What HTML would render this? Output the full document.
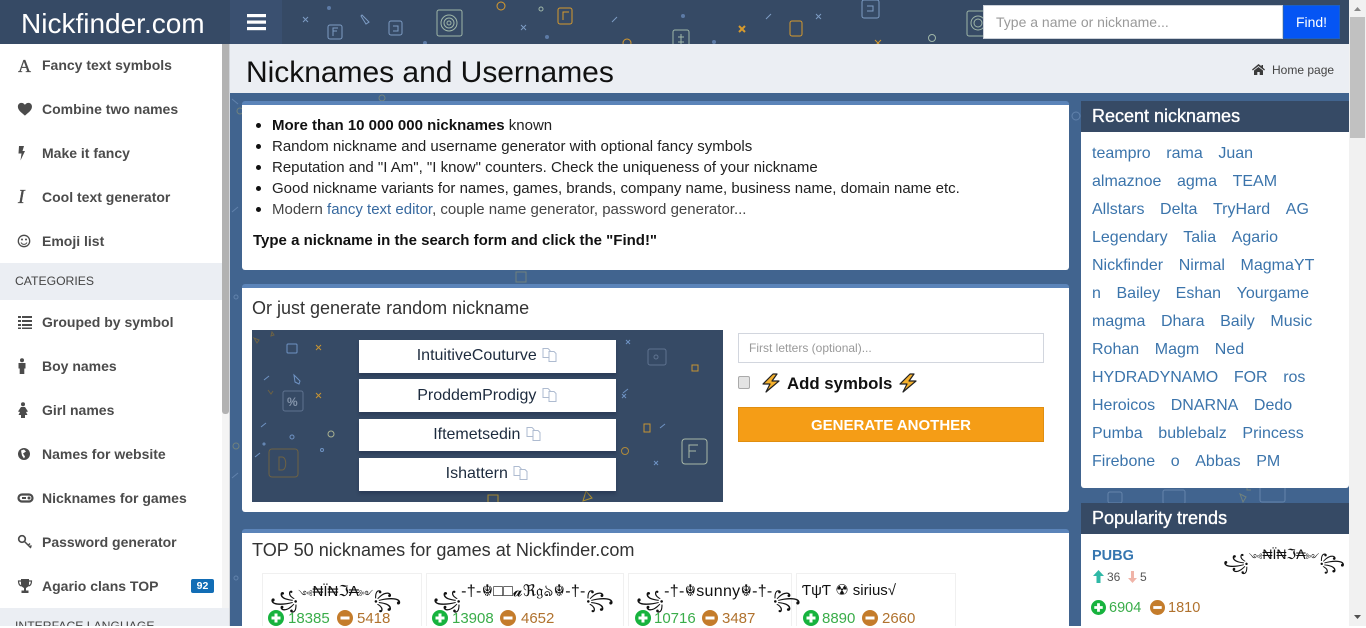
<!DOCTYPE html>
<html><head><meta charset="utf-8"><title>Nicknames and Usernames</title>
<style>
*{box-sizing:border-box}
html,body{margin:0;padding:0;width:1366px;height:626px;overflow:hidden;background:#fff;font-family:"Liberation Sans",sans-serif}
.a{position:absolute;white-space:nowrap}
#bg{position:absolute;left:0;top:0}
.nav{position:absolute;left:42px;font-size:14px;font-weight:700;color:#4b4b4b;white-space:nowrap;line-height:16px}
.ic{position:absolute;left:17px;width:18px;height:16px;fill:#4b4b4b}
.band{position:absolute;left:0;width:222px;background:#ebeef3;color:#444;font-size:12.2px;padding-left:15px}
.card{position:absolute;background:#fff;border-top:4px solid #5b84b9;border-radius:3px}
ul{margin:0;padding:0;list-style:none}
li{position:absolute;left:272px;font-size:15px;color:#222;white-space:nowrap;line-height:21px}
li:before{content:"";position:absolute;left:-16px;top:8px;width:5px;height:5px;border-radius:50%;background:#111}
.nm{position:absolute;left:359px;width:257px;background:#fff;box-shadow:0 3px 3px rgba(30,45,70,.45);text-align:center;font-size:16px;color:#1d2b3e;white-space:nowrap}
.nm svg{vertical-align:-3px}
.rc{position:absolute;left:1092px;font-size:16px;color:#3b74ab;white-space:nowrap;word-spacing:0;line-height:28px}
.rc span{margin-right:15.6px}
.hd{font-size:18px;font-weight:400;line-height:22px;color:#fff;-webkit-text-stroke:.35px #fff}
.it{position:absolute;top:573px;height:53px;border:1px solid #f0f0f0;border-bottom:0}
.nk{position:absolute;font-size:15px;line-height:20px;color:#111;white-space:nowrap;font-family:"Liberation Sans","DejaVu Sans",sans-serif}
.nk .s{font-size:18px;position:relative;top:10px}
.nk .t{font-size:9px;position:relative;top:1px}
.nk .m{font-size:16px;letter-spacing:.3px}
.g{color:#3aad4a;font-size:15px}.o{color:#b0722e;font-size:15px}
</style></head><body>

<!-- main background -->
<div class="a" style="left:230px;top:93px;width:1119px;height:533px;background:#41648f"></div>
<!-- header -->
<div class="a" style="left:0;top:0;width:1349px;height:44px;background:#364a65"></div>
<div class="a" style="left:230px;top:0;width:52px;height:44px;background:#3a5070"></div>

<!-- decoration -->
<svg id="bg" width="1349" height="626" fill="none" stroke-width="1">
 <g stroke="#7d9cc4"><rect x="328" y="25" width="14" height="14" rx="2"/><path d="M333 36v-8h5M333 31h4"/><rect x="389" y="21" width="13" height="14" rx="2"/><path d="M393 26h5v5h-5"/><rect x="862" y="0" width="17" height="18" rx="2"/><path d="M867 6h6v5h-6"/></g>
 <g stroke="#9fb6a8"><rect x="437" y="10" width="25" height="26" rx="2"/><circle cx="449" cy="23" r="8"/><circle cx="449" cy="23" r="5"/><circle cx="449" cy="23" r="2"/><rect x="673" y="30" width="16" height="20" rx="2"/><path d="M681 34v12M678 37h6M678 42h6"/><rect x="967" y="11" width="22" height="25" rx="2"/><circle cx="978" cy="23" r="7"/><circle cx="978" cy="23" r="4"/><circle cx="541" cy="9" r="2"/><circle cx="932" cy="38" r="3.5"/></g>
 <g stroke="#d79a2d"><rect x="558" y="8" width="14" height="16" rx="2"/><path d="M563 20v-8h6"/><circle cx="501" cy="6" r="4"/><circle cx="627" cy="43" r="4"/><rect x="790" y="21" width="12" height="15" rx="2"/><path d="M739 26l6 6M745 26l-6 6" stroke-width="2"/><path d="M875 40l6 6M881 40l-6 6"/></g>
 <g stroke="#7d9cc4"><path d="M303 17l5 5M308 17l-5 5M521 25l5 5M526 25l-5 5M816 14l5 5M821 14l-5 5"/><path d="M362 15l-1 1 5 8 3-2zM612 22l5-5M766 19l5-5"/></g>
 <g fill="#5d7ba6"><circle cx="329" cy="8" r="2"/><circle cx="425" cy="43" r="2"/><circle cx="547" cy="37" r="2"/><circle cx="683" cy="16" r="2"/><circle cx="714" cy="42" r="2"/></g>
 <!-- main bg pattern -->
 <g stroke="#a8a468" opacity=".45"><circle cx="240" cy="111" r="3"/><circle cx="382" cy="98" r="3"/><rect x="516" y="272" width="10" height="10"/><path d="M1240 494l6 3-3 5z"/><path d="M1251 490h-4v-8"/><circle cx="236" cy="446" r="3"/><path d="M1096 513l5 4M1100 513l-3 3"/></g>
 <g stroke="#8aa5c8" opacity=".5"><rect x="1108" y="492" width="14" height="11" rx="2"/><rect x="1163" y="490" width="22" height="14" rx="2"/><rect x="1260" y="484" width="25" height="18" rx="2"/></g>
 <g stroke="#6f8fb8" opacity=".7"><path d="M232 212l6-5M232 478l6-5"/><path d="M232 99l6 5"/><circle cx="236" cy="578" r="2"/><circle cx="236" cy="297" r="2"/><circle cx="1076" cy="116" r="4"/></g>
</svg>

<!-- sidebar -->
<div class="a" style="left:0;top:44px;width:222px;height:582px;background:#fff"></div>
<div class="a" style="left:222px;top:44px;width:7px;height:582px;background:#f4f4f4"></div>
<div class="a" style="left:222px;top:44px;width:7px;height:370px;background:#b2b2b2;border-radius:0 0 3px 3px"></div>
<div class="a" style="left:229px;top:44px;width:1px;height:582px;background:#d2d5da"></div>

<div class="a" style="left:21px;top:6px;font-size:28px;line-height:36px;color:#fff">Nickfinder.com</div>
<svg class="a" style="left:247px;top:14px" width="19" height="17" fill="#fff"><rect width="19" height="3.2"/><rect y="6.5" width="19" height="3.2"/><rect y="13" width="19" height="3.2"/></svg>

<div class="a" style="left:18px;top:55px;font:400 18px/22px 'Liberation Serif',serif;color:#4b4b4b;-webkit-text-stroke:.35px #4b4b4b">A</div>
<div class="nav" style="top:57px">Fancy text symbols</div>
<svg class="ic" style="top:102px" viewBox="0 0 18 16"><path transform="scale(.88)" d="M9 15.500C5 12 1 9.500 1 5.300 1 2.500 3 1 5 1c2 0 3.200 1 4 2.300C9.800 2 11 1 13 1c2 0 4 1.500 4 4.300 0 4.200-4 6.700-8 10.200z"/></svg>
<div class="nav" style="top:101px">Combine two names</div>
<svg class="ic" style="top:145px" viewBox="0 0 18 16"><path d="M2 1h5L5.500 6H8L3.500 15.500 4.500 8.500H1.500z"/></svg>
<div class="nav" style="top:145px">Make it fancy</div>
<div class="a" style="left:18px;top:186px;font:italic 400 20px/22px 'Liberation Serif',serif;color:#4b4b4b;-webkit-text-stroke:.35px #4b4b4b">I</div>
<div class="nav" style="top:189px">Cool text generator</div>
<svg class="ic" style="top:233px" viewBox="0 0 18 16"><circle cx="7" cy="8" r="5.700" fill="none" stroke="#4b4b4b" stroke-width="1.300"/><circle cx="5" cy="6.500" r="1"/><circle cx="9" cy="6.500" r="1"/><path d="M4 9.500c1.500 2.500 4.500 2.500 6 0" fill="none" stroke="#4b4b4b"/></svg>
<div class="nav" style="top:233px">Emoji list</div>

<div class="band" style="top:263px;height:37px;line-height:36px">CATEGORIES</div>

<svg class="ic" style="top:314px" viewBox="0 0 18 16"><path d="M1 2h3v2H1zM5 2h10v2H5zM1 6h3v2H1zM5 6h10v2H5zM1 10h3v2H1zM5 10h10v2H5zM1 13.500h3v1.500H1zM5 13.500h10v1.500H5z"/></svg>
<div class="nav" style="top:314px">Grouped by symbol</div>
<svg class="ic" style="top:358px" viewBox="0 0 18 16"><circle cx="5" cy="2.300" r="2"/><path d="M1.500 5h7v5.500H7.300V16H2.700V10.500H1.500z"/></svg>
<div class="nav" style="top:358px">Boy names</div>
<svg class="ic" style="top:402px" viewBox="0 0 18 16"><circle cx="6" cy="2.300" r="2"/><path d="M4 5h4l3 4.500-2 .5 1.500 3H8v3H4v-3H1.500L3 10l-2-.5z"/></svg>
<div class="nav" style="top:402px">Girl names</div>
<svg class="ic" style="top:446px" viewBox="0 0 18 16"><circle cx="7" cy="8" r="6"/><path d="M4 4.500l3-1 2 2-3 2 2 3-1 2-2-3z" fill="#fff"/></svg>
<div class="nav" style="top:446px">Names for website</div>
<svg class="ic" style="top:490px" viewBox="0 0 18 16"><rect x="1.500" y="4.500" width="14" height="7" rx="3.500" fill="none" stroke="#4b4b4b" stroke-width="2.200"/><rect x="5" y="7" width="4" height="2"/><circle cx="12" cy="8" r="1.500"/></svg>
<div class="nav" style="top:490px">Nicknames for games</div>
<svg class="ic" style="top:534px" viewBox="0 0 18 16" fill="none"><circle cx="5" cy="5" r="3.300" fill="none" stroke="#4b4b4b" stroke-width="1.700"/><path d="M7.500 7.500l6.500 6.500M11 11.500l2-2M13 13l1.500-1.500" stroke="#4b4b4b" stroke-width="1.500"/></svg>
<div class="nav" style="top:534px">Password generator</div>
<svg class="ic" style="top:578px" viewBox="0 0 18 16"><path d="M4 1h8v5c0 2.500-2 3.500-3 4v2.500h2.500V15h-7v-2.500H7V10C6 9.500 4 8.500 4 6z"/><path d="M4 3H1.500c0 3 1 4.500 3 5M12 3h2.500c0 3-1 4.500-3 5" fill="none" stroke="#4b4b4b" stroke-width="1.200"/></svg>
<div class="nav" style="top:578px">Agario clans TOP</div>
<div class="a" style="left:191px;top:579px;width:23px;height:14px;background:#126db5;border-radius:2px;color:#fff;font:700 10.500px/14px 'Liberation Sans',sans-serif;text-align:center">92</div>
<div class="band" style="top:608px;height:18px;width:229px;line-height:37px;overflow:hidden">INTERFACE LANGUAGE</div>

<!-- title band -->
<div class="a" style="left:230px;top:44px;width:1119px;height:49px;background:#ebeef3"></div>
<div class="a" style="left:246px;top:55px;font-size:30px;line-height:36px;color:#111;letter-spacing:-.03px">Nicknames and Usernames</div>
<svg class="a" style="left:1252px;top:64px" width="13" height="11" viewBox="0 0 13 11" fill="#3a3a3a"><path d="M6.500 0L0 5.500l.8 1L6.500 2l5.700 4.500.8-1-2-1.700V1H9.500v1.300zM2 6.500V11h3.300V8h2.400v3H11V6.500L6.500 3z"/></svg>
<div class="a" style="left:1272px;top:62px;font-size:12px;line-height:16px;color:#444">Home page</div>

<!-- search -->
<div class="a" style="left:983px;top:5px;width:300px;height:34px;background:#fff;border:1px solid #cdd2da;font-size:14px;line-height:32px;color:#999;padding-left:12px">Type a name or nickname...</div>
<div class="a" style="left:1283px;top:5px;width:57px;height:34px;background:#0555f4;border:1px solid #1a5fc8;color:#fff;font-size:14px;line-height:32px;text-align:center">Find!</div>

<!-- card 1 -->
<div class="card" style="left:242px;top:101px;width:827px;height:169px"></div>
<ul>
 <li style="top:115px"><b style="color:#111">More than 10 000 000 nicknames</b> known</li>
 <li style="top:136px">Random nickname and username generator with optional fancy symbols</li>
 <li style="top:157px">Reputation and "I Am", "I know" counters. Check the uniqueness of your nickname</li>
 <li style="top:178px">Good nickname variants for names, games, brands, company name, business name, domain name etc.</li>
 <li style="top:199px;color:#444">Modern <span style="color:#37699f">fancy text editor</span>, couple name generator, password generator...</li>
</ul>
<div class="a" style="left:253px;top:231px;font-size:15px;font-weight:700;line-height:20px;color:#111">Type a nickname in the search form and click the "Find!"</div>

<!-- card 2 -->
<div class="card" style="left:242px;top:284px;width:827px;height:228px"></div>
<div class="a" style="left:252px;top:297px;font-size:18px;line-height:22px;color:#333">Or just generate random nickname</div>
<div class="a" style="left:252px;top:330px;width:471px;height:172px;background:#364a65;overflow:hidden">
 <svg width="471" height="172" fill="none">
  <g stroke="#5f7390"><rect x="31" y="61" width="20" height="20" rx="2"/><rect x="396" y="19" width="18" height="16" rx="2"/><circle cx="404" cy="27" r="2"/></g>
  <text x="35" y="76" font-size="12" font-weight="700" fill="#8494aa" font-family="Liberation Sans">%</text>
  <g stroke="#6d6244"><rect x="17" y="119" width="29" height="28" rx="3"/><path d="M27 127v13h3c5 0 5-13 0-13z"/><path d="M2 8l3 5 2-3zM20 2l2 3-3 1zM16 60l3 4 2-3"/></g>
  <g stroke="#a8b8a8"><rect x="430" y="109" width="25" height="25" rx="3"/><path d="M437 128v-13h9M437 121h7"/></g>
  <g stroke="#6f93c4"><rect x="35" y="14" width="10" height="9" rx="1"/><path d="M42 45l6 6-1 3-4-2zM12 50l5-4M9 97l5-4M3 127l5-4M291 36l5-4M371 63l5-4M408 98l5-4"/><path d="M374 10l4 4M378 10l-4 4M370 64l4 4M374 64l-4 4M402 131l4 4M406 131l-4 4"/><circle cx="40" cy="107" r="2"/><circle cx="70" cy="120" r="1.500"/><circle cx="12" cy="114" r="1"/></g>
  <g stroke="#c79432"><path d="M64 15l5 5M69 15l-5 5M64 63l5 5M69 63l-5 5"/><rect x="440" y="35" width="6" height="6"/><rect x="392" y="94" width="6" height="8"/></g>
  <circle cx="79" cy="104" r="3" stroke="#a8b090"/><circle cx="132" cy="155" r="3" stroke="#9a8540"/><circle cx="373" cy="121" r="3.500" stroke="#b08a3a"/>
  <path d="M331 171l3 -10 6 7z" stroke="#b09030"/><rect x="236" y="165" width="10" height="8" stroke="#b09030"/>
 </svg>
</div>
<div class="nm" style="top:340px;height:33px;line-height:31px">IntuitiveCouturve <svg width="17" height="16" viewBox="0 0 16 16" fill="#fff" stroke="#aebbd0"><path d="M1.500 1.500h5l2 2v7h-7z"/><path d="M7.500 4.500h5l2 2v8h-7z"/></svg></div>
<div class="nm" style="top:379px;height:33px;line-height:31px;padding-top:1px">ProddemProdigy <svg width="17" height="16" viewBox="0 0 16 16" fill="#fff" stroke="#aebbd0"><path d="M1.500 1.500h5l2 2v7h-7z"/><path d="M7.500 4.500h5l2 2v8h-7z"/></svg></div>
<div class="nm" style="top:419px;height:32px;line-height:30px;padding-top:1px">Iftemetsedin <svg width="17" height="16" viewBox="0 0 16 16" fill="#fff" stroke="#aebbd0"><path d="M1.500 1.500h5l2 2v7h-7z"/><path d="M7.500 4.500h5l2 2v8h-7z"/></svg></div>
<div class="nm" style="top:458px;height:33px;line-height:31px">Ishattern <svg width="17" height="16" viewBox="0 0 16 16" fill="#fff" stroke="#aebbd0"><path d="M1.500 1.500h5l2 2v7h-7z"/><path d="M7.500 4.500h5l2 2v8h-7z"/></svg></div>

<div class="a" style="left:738px;top:333px;width:306px;height:30px;border:1px solid #d2d6de;background:#fff;font-size:12px;line-height:28px;color:#999;padding-left:10px">First letters (optional)...</div>
<div class="a" style="left:738px;top:376px;width:12px;height:13px;background:#e4e4e4;border:1px solid #aaa;border-radius:2px"></div>
<svg class="a" style="left:761px;top:373px" width="20" height="20" viewBox="0 0 20 20"><path d="M12 1L2 11h7l-4 8 13-11h-7l5-7z" fill="#f5b12e" stroke="#222" stroke-width="1.200" stroke-linejoin="round"/></svg>
<div class="a" style="left:787px;top:374px;font-size:16.800px;font-weight:700;line-height:20px;color:#111">Add symbols</div>
<svg class="a" style="left:898px;top:373px" width="20" height="20" viewBox="0 0 20 20"><path d="M12 1L2 11h7l-4 8 13-11h-7l5-7z" fill="#f5b12e" stroke="#222" stroke-width="1.200" stroke-linejoin="round"/></svg>
<div class="a" style="left:738px;top:407px;width:306px;height:35px;background:#f59d16;border:1px solid #e08e10;color:#fff;font-size:15px;font-weight:700;line-height:35px;text-align:center">GENERATE ANOTHER</div>

<!-- card 3 -->
<div class="card" style="left:242px;top:529px;width:827px;height:97px;border-radius:3px 3px 0 0"></div>
<div class="a" style="left:252px;top:539px;font-size:18.100px;line-height:22px;color:#333">TOP 50 nicknames for games at Nickfinder.com</div>
<div class="it" style="left:262px;width:160px"></div>
<div class="it" style="left:426px;width:198px"></div>
<div class="it" style="left:628px;width:164px"></div>
<div class="it" style="left:796px;width:160px"></div>
<div class="nk" style="left:270px;top:580px"><span class="s">꧁</span><span class="t">༺</span>₦Ï₦ℑ₳<span class="t">༻</span><span class="s">꧂</span></div>
<div class="nk" style="left:433px;top:580px"><span class="s">꧁</span><span class="m">-†-☬□□𝓪ℜ𝔤ঌ☬-†-</span><span class="s">꧂</span></div>
<div class="nk" style="left:636px;top:580px"><span class="s">꧁</span><span class="m">-†-☬sunny☬-†-</span><span class="s">꧂</span></div>
<div class="nk" style="left:802px;top:581px">ƬψƬ ☢ sirius√</div>

<svg class="a" style="left:268px;top:610px" width="16" height="16" viewBox="0 0 16 16"><circle cx="8" cy="8" r="8" fill="#17b33e"/><path d="M3.500 8h9M8 3.500v9" stroke="#fff" stroke-width="3"/></svg>
<div class="a g" style="left:288px;top:610px;line-height:18px">18385</div>
<svg class="a" style="left:337px;top:610px" width="16" height="16" viewBox="0 0 16 16"><circle cx="8" cy="8" r="8" fill="#c47c2b"/><path d="M3.500 8h9" stroke="#fff" stroke-width="3"/></svg>
<div class="a o" style="left:357px;top:610px;line-height:18px">5418</div>
<svg class="a" style="left:432px;top:610px" width="16" height="16" viewBox="0 0 16 16"><circle cx="8" cy="8" r="8" fill="#17b33e"/><path d="M3.500 8h9M8 3.500v9" stroke="#fff" stroke-width="3"/></svg>
<div class="a g" style="left:452px;top:610px;line-height:18px">13908</div>
<svg class="a" style="left:500px;top:610px" width="16" height="16" viewBox="0 0 16 16"><circle cx="8" cy="8" r="8" fill="#c47c2b"/><path d="M3.500 8h9" stroke="#fff" stroke-width="3"/></svg>
<div class="a o" style="left:521px;top:610px;line-height:18px">4652</div>
<svg class="a" style="left:635px;top:610px" width="16" height="16" viewBox="0 0 16 16"><circle cx="8" cy="8" r="8" fill="#17b33e"/><path d="M3.500 8h9M8 3.500v9" stroke="#fff" stroke-width="3"/></svg>
<div class="a g" style="left:654px;top:610px;line-height:18px">10716</div>
<svg class="a" style="left:702px;top:610px" width="16" height="16" viewBox="0 0 16 16"><circle cx="8" cy="8" r="8" fill="#c47c2b"/><path d="M3.500 8h9" stroke="#fff" stroke-width="3"/></svg>
<div class="a o" style="left:722px;top:610px;line-height:18px">3487</div>
<svg class="a" style="left:803px;top:610px" width="16" height="16" viewBox="0 0 16 16"><circle cx="8" cy="8" r="8" fill="#17b33e"/><path d="M3.500 8h9M8 3.500v9" stroke="#fff" stroke-width="3"/></svg>
<div class="a g" style="left:822px;top:610px;line-height:18px">8890</div>
<svg class="a" style="left:862px;top:610px" width="16" height="16" viewBox="0 0 16 16"><circle cx="8" cy="8" r="8" fill="#c47c2b"/><path d="M3.500 8h9" stroke="#fff" stroke-width="3"/></svg>
<div class="a o" style="left:882px;top:610px;line-height:18px">2660</div>

<!-- right column -->
<div class="a" style="left:1081px;top:101px;width:268px;height:31px;background:#364a65"></div>
<div class="a" style="left:1081px;top:132px;width:268px;height:356px;background:#fff;border-radius:0 0 3px 3px"></div>
<div class="a hd" style="left:1092px;top:105px">Recent nicknames</div>
<div class="rc" style="top:140px"><span>teampro</span><span>rama</span><span>Juan</span></div>
<div class="rc" style="top:168px"><span>almaznoe</span><span>agma</span><span>TEAM</span></div>
<div class="rc" style="top:196px"><span>Allstars</span><span>Delta</span><span>TryHard</span><span>AG</span></div>
<div class="rc" style="top:224px"><span>Legendary</span><span>Talia</span><span>Agario</span></div>
<div class="rc" style="top:252px"><span>Nickfinder</span><span>Nirmal</span><span>MagmaYT</span></div>
<div class="rc" style="top:280px"><span>n</span><span>Bailey</span><span>Eshan</span><span>Yourgame</span></div>
<div class="rc" style="top:308px"><span>magma</span><span>Dhara</span><span>Baily</span><span>Music</span></div>
<div class="rc" style="top:336px"><span>Rohan</span><span>Magm</span><span>Ned</span></div>
<div class="rc" style="top:364px"><span>HYDRADYNAMO</span><span>FOR</span><span>ros</span></div>
<div class="rc" style="top:392px"><span>Heroicos</span><span>DNARNA</span><span>Dedo</span></div>
<div class="rc" style="top:420px"><span>Pumba</span><span>bublebalz</span><span>Princess</span></div>
<div class="rc" style="top:448px"><span>Firebone</span><span>o</span><span>Abbas</span><span>PM</span></div>

<div class="a" style="left:1081px;top:503px;width:268px;height:31px;background:#364a65"></div>
<div class="a" style="left:1081px;top:534px;width:268px;height:92px;background:#fff"></div>
<div class="a hd" style="left:1092px;top:507px">Popularity trends</div>
<div class="a" style="left:1092px;top:547px;font-size:14.500px;font-weight:700;line-height:18px;color:#3676b0">PUBG</div>
<svg class="a" style="left:1093px;top:570px" width="11" height="13" viewBox="0 0 11 13" fill="#2fb8a6"><path d="M5.500 0L11 6H7.500v7h-4V6H0z"/></svg>
<div class="a" style="left:1107px;top:569px;font-size:12px;line-height:16px;color:#555">36</div>
<svg class="a" style="left:1128px;top:571px" width="9" height="12" viewBox="0 0 9 12" fill="#f0b4a8"><path d="M3 0h3v7h3l-4.500 5L0 7h3z"/></svg>
<div class="a" style="left:1140px;top:569px;font-size:12px;line-height:16px;color:#555">5</div>
<div class="nk" style="left:1223px;top:544px;font-size:14px"><span class="s" style="font-size:16.500px;top:9px">꧁</span><span class="t" style="font-size:8.500px">༺</span>₦Ï₦ℑ₳<span class="t" style="font-size:8.500px">༻</span><span class="s" style="font-size:16.500px;top:9px">꧂</span></div>
<svg class="a" style="left:1091px;top:600px" width="15" height="15" viewBox="0 0 16 16"><circle cx="8" cy="8" r="8" fill="#17b33e"/><path d="M3.500 8h9M8 3.500v9" stroke="#fff" stroke-width="3"/></svg>
<div class="a" style="left:1109px;top:599px;font-size:14.500px;line-height:18px;color:#3aad4a">6904</div>
<svg class="a" style="left:1150px;top:600px" width="15" height="15" viewBox="0 0 16 16"><circle cx="8" cy="8" r="8" fill="#c47c2b"/><path d="M3.500 8h9" stroke="#fff" stroke-width="3"/></svg>
<div class="a" style="left:1168px;top:599px;font-size:14.500px;line-height:18px;color:#b0722e">1810</div>

<!-- page scrollbar -->
<div class="a" style="left:1349px;top:0;width:17px;height:626px;background:#f1f1f1"></div>
<div class="a" style="left:1350px;top:17px;width:15px;height:121px;background:#c1c1c1"></div>
<svg class="a" style="left:1349px;top:0" width="17" height="626" fill="#888"><path d="M5 11l3.500-4 3.500 4z"/><path d="M5 615l3.500 4 3.500-4z" fill="#505050"/></svg>
</body></html>
